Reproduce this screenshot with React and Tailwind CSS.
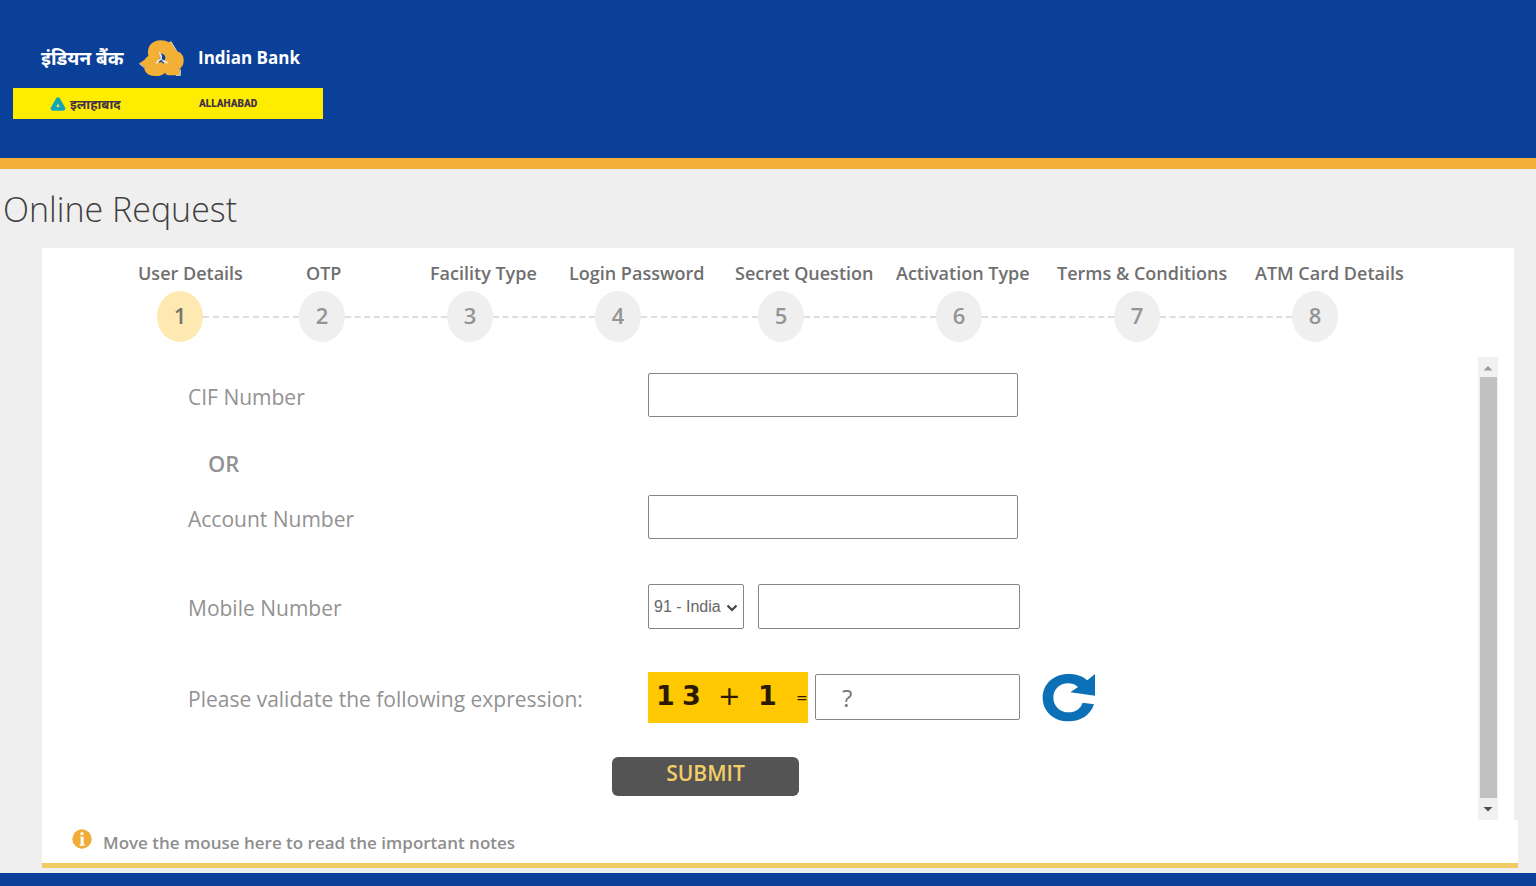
import React from "react";

const stepLabels = [
  "User Details",
  "OTP",
  "Facility Type",
  "Login Password",
  "Secret Question",
  "Activation Type",
  "Terms & Conditions",
  "ATM Card Details",
];

const connectors = [
  "grow-[96]",
  "grow-[102]",
  "grow-[102]",
  "grow-[117]",
  "grow-[132]",
  "grow-[132]",
  "grow-[132]",
];

function BankEmblem() {
  return (
    <svg viewBox="0 0 156 132" className="h-11 w-[52px]" aria-hidden="true">
      <path
        d="M37 60C31 32 48 13 74 13C84 13 92 15 99 19L105 16L122 45C137 50 144 61 143 76C142 87 138 94 131 99L133 118H97C92 117 89 114 87 110C80 118 70 121 57 120C36 119 24 109 25 93L10 82L26 71C29 66 33 63 37 60Z"
        fill="#f2b136"
      />
      <path d="M104 16L122 45M133 100V118H120M10 83L25 95" fill="none" stroke="#d3dade" strokeWidth="3" />
      <path d="M71 50C79 53 88 56 88 65C88 71 84 75 79 74L74 79L68 75C73 67 73 59 71 50Z" fill="#0b4099" />
      <path d="M70 49C75 56 77 62 75 70C70 72 64 76 61 82M76 72C81 72 85 79 95 80" fill="none" stroke="#e6ecee" strokeWidth="5" />
      <path d="M70 79L76 74L83 82" fill="none" stroke="#1d4a92" strokeWidth="4" />
    </svg>
  );
}

function Header() {
  return (
    <header className="h-[169px] shrink-0 border-b-[11px] border-[#f2ae38] bg-[#0b4099] pt-9 pl-[13px]">
      <div className="w-[310px]">
        <div className="flex h-[52px] items-start pl-7 text-white">
          <span lang="hi" className="w-[95px] pt-2 text-[19px] leading-7 font-bold whitespace-nowrap">
            इंडियन बैंक
          </span>
          <BankEmblem />
          <span className="ml-2.5 pt-2 text-[17px] leading-7 font-bold whitespace-nowrap">Indian Bank</span>
        </div>
        <div className="flex h-[31px] items-center bg-[#ffed00] pl-[37px] text-[#43304a]">
          <svg viewBox="0 0 48 42" className="h-3.5 w-4" aria-hidden="true">
            <path d="M19 3Q24-2 29 3L46 33Q47 40 40 41H8Q1 40 2 33Z" fill="#12a5b5" />
            <path d="M24 19L29 30H19Z" fill="#d8e86a" />
          </svg>
          <span lang="hi" className="ml-1 w-[129px] text-[13px] leading-5 font-bold whitespace-nowrap">
            इलाहाबाद
          </span>
          <span className="font-['Roboto','Open_Sans',sans-serif] text-[10px] leading-5 font-black">ALLAHABAD</span>
        </div>
      </div>
    </header>
  );
}

function Stepper() {
  return (
    <nav aria-label="Progress" className="pt-[9px] pr-[108px] pl-24">
      <ol className="grid grid-cols-[168fr_124fr_139fr_166fr_161fr_161fr_198fr_151fr] text-lg leading-8 font-semibold whitespace-nowrap text-[#6f6f6f]">
        {stepLabels.map((label) => (
          <li key={label}>{label}</li>
        ))}
      </ol>
      <div className="mt-0.5 flex items-center pr-[68px] pl-[19px]">
        {stepLabels.map((label, i) => (
          <React.Fragment key={label}>
            {i > 0 && <span className={`h-0 basis-0 border-t-2 border-dashed border-[#dedede] ${connectors[i - 1]}`} />}
            <span
              className={`flex h-[51px] w-[46px] shrink-0 items-center justify-center rounded-[50%] pb-1 text-[22px] leading-8 font-semibold ${
                i === 0 ? "bg-[#ffe9b3] text-[#777469]" : "bg-[#efefef] text-[#949494]"
              }`}
            >
              {i + 1}
            </span>
          </React.Fragment>
        ))}
      </div>
    </nav>
  );
}

function Scrollbar() {
  return (
    <div className="flex w-5 shrink-0 flex-col items-center bg-[#f1f1f1]" aria-hidden="true">
      <svg viewBox="0 0 20 20" className="h-5 w-5">
        <path d="M5.500 13.500L10 9L14.500 13.500Z" fill="#9a9a9a" />
      </svg>
      <div className="w-[17px] grow bg-[#c1c1c1]" />
      <svg viewBox="0 0 20 22" className="h-[22px] w-5">
        <path d="M5.500 9L10 13.500L14.500 9Z" fill="#505050" />
      </svg>
    </div>
  );
}

const field = "rounded-xs border border-[#858585] bg-white px-3 text-[#777] outline-none";
const row = "grid grid-cols-[460px_1fr] items-center";
const rowLabel = "pt-[3px]";

function RequestForm() {
  return (
    <form className="grow pt-4 pl-[146px] text-[21px] leading-8 text-[#929292]" onSubmit={(e) => e.preventDefault()}>
      <div className={row}>
        <label htmlFor="cif" className={rowLabel}>CIF Number</label>
        <input id="cif" type="text" className={`h-11 w-[370px] ${field}`} />
      </div>
      <p className="mt-[30px] mb-4 pl-5 text-[22px] font-semibold">OR</p>
      <div className={row}>
        <label htmlFor="account" className={rowLabel}>Account Number</label>
        <input id="account" type="text" className={`h-11 w-[370px] ${field}`} />
      </div>
      <div className={`mt-[45px] ${row}`}>
        <label htmlFor="mobile" className={rowLabel}>Mobile Number</label>
        <div className="flex gap-3.5">
          <div className="relative">
            <select
              aria-label="Country code"
              className="h-[45px] w-24 appearance-none rounded-xs border border-[#858585] bg-white pl-[5px] font-['Liberation_Sans',Arial,sans-serif] text-base text-[#666]"
            >
              <option>91 - India</option>
            </select>
            <svg viewBox="0 0 12 8" className="pointer-events-none absolute top-5 right-1.5 h-2 w-3" aria-hidden="true">
              <path d="M1.500 1.500L6 6L10.500 1.500" fill="none" stroke="#444" strokeWidth="2.200" />
            </svg>
          </div>
          <input id="mobile" type="tel" className={`h-[45px] w-[262px] ${field}`} />
        </div>
      </div>
      <div className={`mt-10 ${row}`}>
        <label htmlFor="answer" className={rowLabel}>Please validate the following expression:</label>
        <div className="flex items-center">
          <div className="flex h-[51px] w-40 shrink-0 bg-[#ffc800] pt-2 pl-2 font-['DejaVu_Sans',Verdana,sans-serif] text-[27px] leading-8 whitespace-nowrap text-[#2b1a00]">
            <span className="w-[26px] shrink-0 font-bold">1</span>
            <span className="w-9 shrink-0 font-bold">3</span>
            <span className="w-10 shrink-0">+</span>
            <span className="w-[38px] shrink-0 font-bold">1</span>
            <span className="shrink-0 text-sm leading-9">=</span>
          </div>
          <input
            id="answer"
            type="text"
            placeholder="?"
            className="ml-[7px] h-[46px] w-[205px] rounded-xs border border-[#858585] bg-white px-[26px] text-2xl outline-none placeholder:text-[#777]"
          />
          <button type="button" aria-label="Refresh expression" className="ml-4">
            <svg viewBox="0 0 198 168" className="h-14 w-[66px]" aria-hidden="true">
              <path
                d="M154 34L177 15V80L103 70L126 54C117 46 108 43 97 43C71 43 52 61 52 86C52 111 72 130 98 130C118 130 133 120 140 101L174 106C163 139 134 157 98 157C53 157 20 127 20 86C20 45 53 15 97 15C119 15 138 20 154 34Z"
                fill="#0c70b7"
              />
            </svg>
          </button>
        </div>
      </div>
      <button
        type="submit"
        className="mt-8 ml-[424px] flex h-[39px] w-[187px] justify-center rounded-md bg-[#545454] font-semibold text-[#f2cd68]"
      >
        SUBMIT
      </button>
    </form>
  );
}

export default function App() {
  return (
    <div className="flex min-h-screen flex-col bg-[#efefef] font-['Open_Sans','Noto_Sans',sans-serif]">
      <Header />
      <main className="grow">
        <h1 className="pt-4 pb-[15px] pl-[3px] text-[34px] leading-[48px] font-light text-[#3f3f3f]">Online Request</h1>
        <section className="mr-[22px] ml-[42px] bg-white">
          <Stepper />
          <div className="flex pt-[15px] pr-4">
            <div className="flex h-[463px] grow">
              <RequestForm />
              <Scrollbar />
            </div>
          </div>
        </section>
        <aside className="mr-[18px] mb-[5px] ml-[42px] flex h-12 items-start border-b-[5px] border-[#efcb66] bg-white pl-[30px]">
          <svg viewBox="0 0 60 60" className="mt-[9px] h-5 w-5" aria-hidden="true">
            <circle cx="30" cy="30" r="29" fill="#f0ac35" />
            <circle cx="30" cy="14" r="5" fill="#fff" />
            <path d="M25 23H35V46H38V50H23V46H26V27H25Z" fill="#fff" />
          </svg>
          <p className="mt-[9px] ml-[11px] text-[17px] leading-7 font-semibold text-[#8e8e8e]">
            Move the mouse here to read the important notes
          </p>
        </aside>
      </main>
      <footer className="h-[13px] shrink-0 bg-[#0b4099]" />
    </div>
  );
}
